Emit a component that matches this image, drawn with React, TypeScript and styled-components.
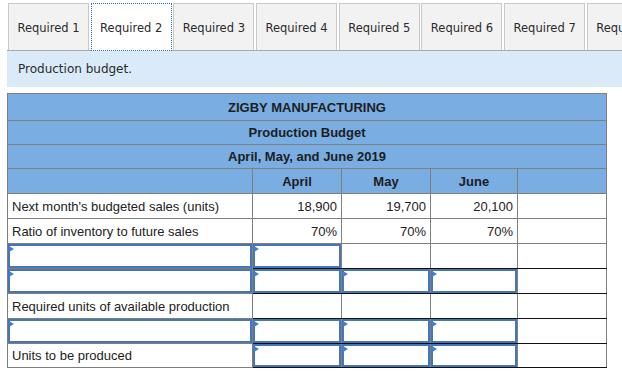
import React from 'react';
import styled, { createGlobalStyle } from 'styled-components';

const Global = createGlobalStyle`
  html, body { margin: 0; padding: 0; background: #fff; overflow: hidden; }
`;

const Page = styled.div`
  width: 622px;
  height: 375px;
  overflow: hidden;
  box-sizing: border-box;
  padding: 3px 0 0 7px;
`;

const TabStrip = styled.div`
  display: flex;
  gap: 1.7px;
  padding-left: 1px;
  height: 48px;
  box-sizing: border-box;
  border-bottom: 1px solid #a9a9a9;
`;

const Tab = styled.div<{ $active?: boolean }>`
  flex: 0 0 auto;
  width: 81px;
  height: ${(p) => (p.$active ? '48px' : '47px')};
  box-sizing: border-box;
  display: flex;
  align-items: center;
  justify-content: center;
  padding-top: 2px;
  font-family: 'DejaVu Sans', Verdana, sans-serif;
  font-size: 11.5px;
  color: #2a2a2a;
  background: ${(p) => (p.$active ? '#fff' : '#f2f2f2')};
  border: ${(p) => (p.$active ? '1px dotted #2f6cc0' : '1px solid #c9c9c9')};
  border-bottom: ${(p) => (p.$active ? '1px dotted #2f6cc0' : 'none')};
  position: relative;
  z-index: ${(p) => (p.$active ? 1 : 0)};
`;

const Panel = styled.div`
  height: 36px;
  background: #dbeaf8;
  display: flex;
  align-items: center;
  padding-left: 11px;
  font-family: 'DejaVu Sans', Verdana, sans-serif;
  font-size: 12px;
  color: #2a2a2a;
`;

const Table = styled.table`
  margin-top: 6px;
  border-collapse: collapse;
  table-layout: fixed;
  width: 599px;
  font-family: 'Liberation Sans', Arial, sans-serif;
  font-size: 13px;
  color: #222;
`;

const HeadCell = styled.td<{ $h: number }>`
  height: ${(p) => p.$h}px;
  padding: 0 4px;
  box-sizing: border-box;
  background: #7aade2;
  border: 1px solid #7f7f7f;
  font-weight: bold;
  text-align: center;
  color: #1d1d1d;
`;

const Cell = styled.td<{ $num?: boolean; $dark?: boolean; $h: number }>`
  height: ${(p) => p.$h}px;
  padding: 0 4px;
  box-sizing: border-box;
  background: #fff;
  border: 1px solid #7f7f7f;
  ${(p) => (p.$dark ? 'border-top-color: #111; border-bottom-color: #111;' : '')}
  text-align: ${(p) => (p.$num ? 'right' : 'left')};
  white-space: nowrap;
  position: relative;
`;

const InputBox = styled.div`
  position: absolute;
  inset: 0;
  border: 2px solid #4676b8;
  background: #fff;
  &::before {
    content: '';
    position: absolute;
    left: -1px;
    top: 0;
    border-left: 5px solid #3d80d6;
    border-top: 3.5px solid transparent;
    border-bottom: 3.5px solid transparent;
  }
`;

type Row = {
  label?: string;
  labelInput?: boolean;
  vals?: string[];
  inputs?: boolean[];
  dark?: boolean;
  h: number;
};

const rows: Row[] = [
  { label: "Next month's budgeted sales (units)", vals: ['18,900', '19,700', '20,100', ''], h: 25 },
  { label: 'Ratio of inventory to future sales', vals: ['70%', '70%', '70%', ''], h: 25 },
  { labelInput: true, inputs: [true, false, false, false], dark: true, h: 25 },
  { labelInput: true, inputs: [true, true, true, false], dark: true, h: 25 },
  { label: 'Required units of available production', inputs: [false, false, false, false], dark: true, h: 25 },
  { labelInput: true, inputs: [true, true, true, false], dark: true, h: 25 },
  { label: 'Units to be produced', inputs: [true, true, true, false], dark: true, h: 24 },
];

const tabs = ['Required 1', 'Required 2', 'Required 3', 'Required 4', 'Required 5', 'Required 6', 'Required 7', 'Required 8'];

export default function App() {
  return (
    <Page>
      <Global />
      <TabStrip>
        {tabs.map((t, i) => (
          <Tab key={t} $active={i === 1}>
            {t}
          </Tab>
        ))}
      </TabStrip>
      <Panel>Production budget.</Panel>
      <Table>
        <colgroup>
          <col style={{ width: 245 }} />
          <col style={{ width: 89 }} />
          <col style={{ width: 89 }} />
          <col style={{ width: 87 }} />
          <col style={{ width: 89 }} />
        </colgroup>
        <tbody>
          <tr>
            <HeadCell colSpan={5} $h={27}>ZIGBY MANUFACTURING</HeadCell>
          </tr>
          <tr>
            <HeadCell colSpan={5} $h={24}>Production Budget</HeadCell>
          </tr>
          <tr>
            <HeadCell colSpan={5} $h={24}>April, May, and June 2019</HeadCell>
          </tr>
          <tr>
            <HeadCell $h={25}></HeadCell>
            <HeadCell $h={25}>April</HeadCell>
            <HeadCell $h={25}>May</HeadCell>
            <HeadCell $h={25}>June</HeadCell>
            <HeadCell $h={25}></HeadCell>
          </tr>
          {rows.map((r, ri) => (
            <tr key={ri}>
              <Cell $h={r.h}>
                {r.labelInput ? <InputBox /> : r.label}
              </Cell>
              {[0, 1, 2, 3].map((ci) => (
                <Cell key={ci} $h={r.h} $num $dark={r.dark}>
                  {r.inputs && r.inputs[ci] ? <InputBox /> : r.vals ? r.vals[ci] : ''}
                </Cell>
              ))}
            </tr>
          ))}
        </tbody>
      </Table>
    </Page>
  );
}
